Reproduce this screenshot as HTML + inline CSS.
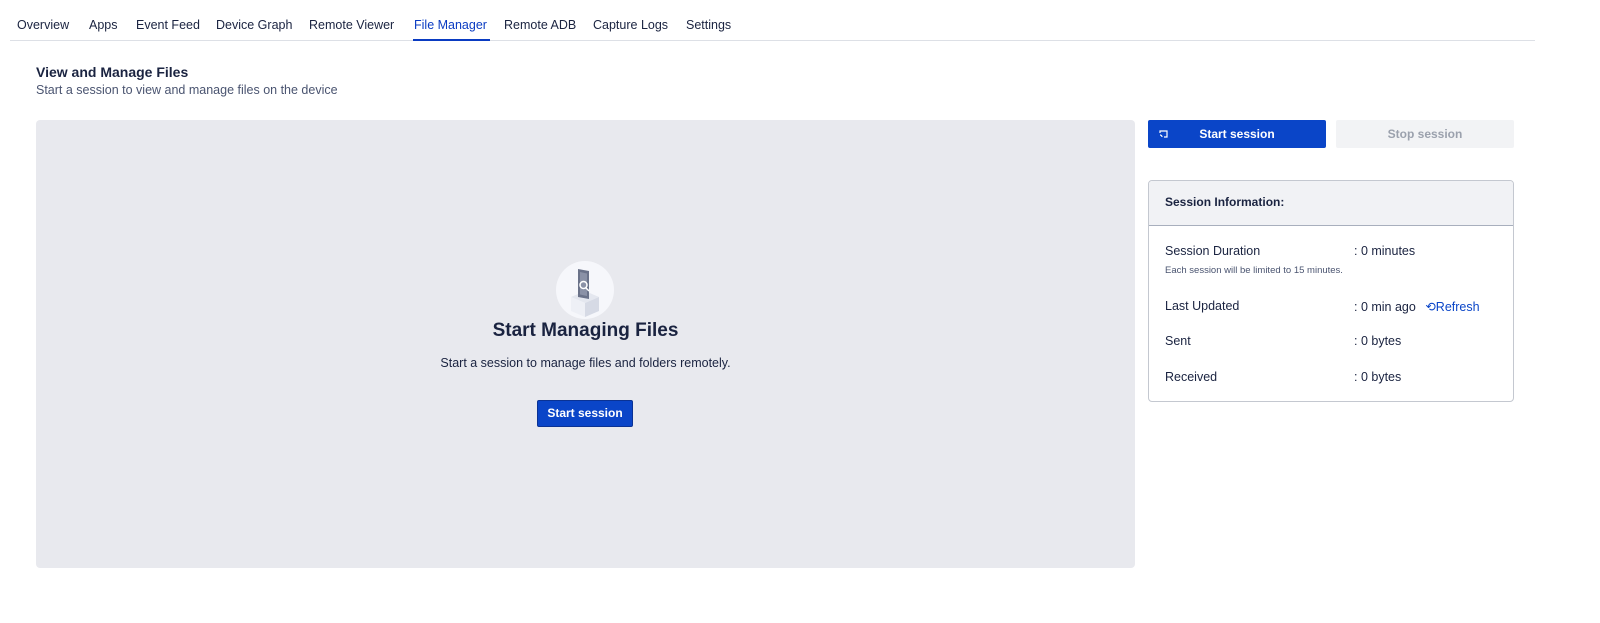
<!DOCTYPE html><html><head><style>
*{box-sizing:border-box;margin:0;padding:0}
body{width:1600px;height:623px;background:#fff;font-family:"Liberation Sans",sans-serif;color:#1a2340;position:relative;overflow:hidden}
.a{position:absolute}
.tab{position:absolute;top:18px;font-size:12.5px;color:#1a2340;white-space:nowrap}
.lbl{position:absolute;left:16px;font-size:12.5px}
.val{position:absolute;left:205px;font-size:12.5px}
</style></head><body>
<div class="a" style="left:10px;top:40px;width:1525px;height:1px;background:#dde0e6"></div>
<span class="tab" style="left:17px">Overview</span>
<span class="tab" style="left:89px">Apps</span>
<span class="tab" style="left:136px">Event Feed</span>
<span class="tab" style="left:216px">Device Graph</span>
<span class="tab" style="left:309px">Remote Viewer</span>
<span class="tab" style="left:414px;color:#0a3bc2">File Manager</span>
<div class="a" style="left:413px;top:39px;width:77px;height:2px;background:#0a3bc2"></div>
<span class="tab" style="left:504px">Remote ADB</span>
<span class="tab" style="left:593px">Capture Logs</span>
<span class="tab" style="left:686px">Settings</span>
<div class="a" style="left:36px;top:64px;font-size:14px;font-weight:bold">View and Manage Files</div>
<div class="a" style="left:36px;top:83px;font-size:12.5px;color:#4a5470">Start a session to view and manage files on the device</div>
<div class="a" style="left:36px;top:120px;width:1099px;height:448px;background:#e8e9ee;border-radius:4px"></div>
<svg class="a" style="left:556px;top:261px" width="58" height="58" viewBox="0 0 58 58">
<circle cx="29" cy="29" r="29" fill="#f6f7fb"/>
<polygon points="15,36 29,30 43,36 29,42" fill="#e4e7ef"/>
<polygon points="22,8 33,10 33,38 22,36" fill="#6a7289"/>
<polygon points="24,11 31,12.5 31,35 24,33.5" fill="#8a91a6"/>
<circle cx="27.5" cy="24" r="3.5" fill="none" stroke="#fff" stroke-width="1.5"/>
<path d="M30 27l3 3" stroke="#fff" stroke-width="1.5"/>
<polygon points="15,36 29,42 29,56 15,50" fill="#eef0f6"/>
<polygon points="29,42 43,36 43,50 29,56" fill="#d6dae5"/>
</svg>
<div class="a" style="left:36px;width:1099px;top:320px;text-align:center;font-size:19px;font-weight:bold">Start Managing Files</div>
<div class="a" style="left:36px;width:1099px;top:356px;text-align:center;font-size:12.5px">Start a session to manage files and folders remotely.</div>
<div class="a" style="left:537px;top:400px;width:96px;height:27px;background:#0a45c8;border:1px solid #0a3294;border-radius:2px;color:#fff;font-size:12px;font-weight:bold;text-align:center;line-height:25px">Start session</div>
<div class="a" style="left:1148px;top:120px;width:178px;height:28px;background:#0a45c8;border-radius:2px;color:#fff;font-size:12px;font-weight:bold;text-align:center;line-height:28px">Start session
<svg class="a" style="left:11px;top:10px" width="9" height="8" viewBox="0 0 9 8"><path d="M1 3V1h7v6H5" fill="none" stroke="#fff" stroke-width="1.2"/><path d="M1 5a2 2 0 0 1 2 2" stroke="#fff" fill="none" stroke-width="1.2"/></svg></div>
<div class="a" style="left:1336px;top:120px;width:178px;height:28px;background:#f2f3f5;border-radius:2px;color:#9ba1ad;font-size:12px;font-weight:bold;text-align:center;line-height:28px">Stop session</div>
<div class="a" style="left:1148px;top:180px;width:366px;height:222px;border:1px solid #c4c8d0;border-radius:4px;overflow:hidden">
<div style="height:45px;background:#f1f2f5;border-bottom:1px solid #a8afbd;font-size:12px;font-weight:bold;padding-left:16px;line-height:43px">Session Information:</div>
<span class="lbl" style="top:63px">Session Duration</span><span class="val" style="top:63px">: 0 minutes</span>
<span class="a" style="left:16px;top:84px;font-size:9.5px;color:#4a5470">Each session will be limited to 15 minutes.</span>
<span class="lbl" style="top:118px">Last Updated</span><span class="val" style="top:118px">: 0 min ago <span style="color:#0a45c8;margin-left:6px">⟲Refresh</span></span>
<span class="lbl" style="top:153px">Sent</span><span class="val" style="top:153px">: 0 bytes</span>
<span class="lbl" style="top:189px">Received</span><span class="val" style="top:189px">: 0 bytes</span>
</div>
</body></html>
